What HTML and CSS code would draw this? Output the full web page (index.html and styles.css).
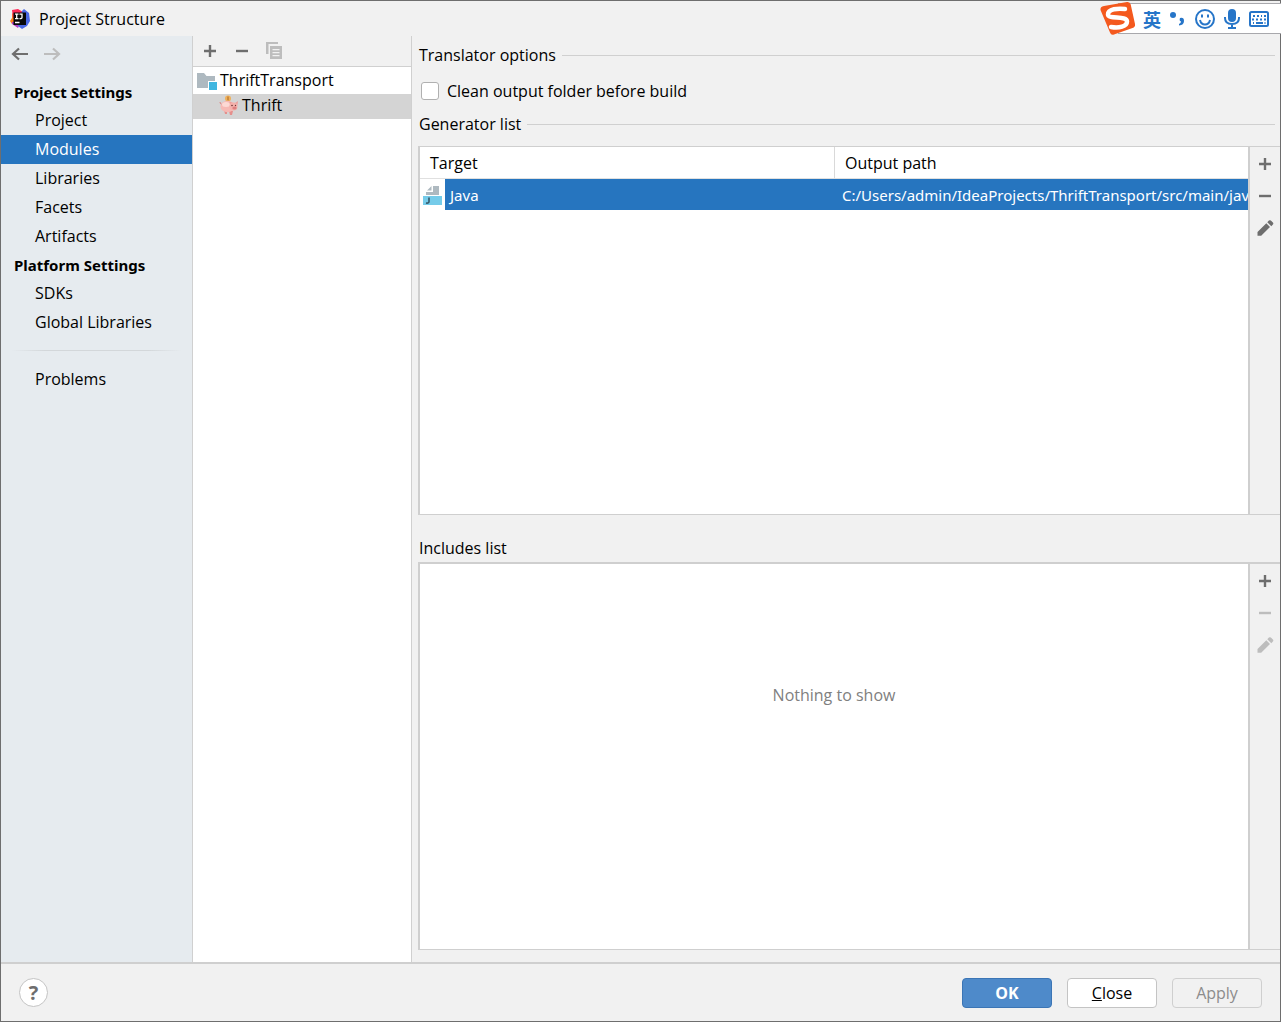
FILE: index.html
```html
<!DOCTYPE html>
<html lang="en">
<head>
    <meta charset="UTF-8">
    <meta name="viewport" content="width=device-width, initial-scale=1.0">
    <title>Project Structure</title>
    <link rel="stylesheet" href="styles.css">
</head>
<body>

<!-- shared icons -->
<svg class="sprite" aria-hidden="true">
    <symbol id="plus" viewBox="0 0 20 20"><path d="M10 4v12M4 10h12" stroke="currentColor" stroke-width="2.4"/></symbol>
    <symbol id="minus" viewBox="0 0 20 20"><path d="M4 10h12" stroke="currentColor" stroke-width="2.4"/></symbol>
    <symbol id="pencil" viewBox="0 0 20 20"><path fill="currentColor" d="M2.500 14 11.300 5.200l3.700 3.700L6.200 17.700H2.500zM12.300 4.200l1.600-1.600q1-.9 2 0l2 2q.9 1 0 2l-1.600 1.600z"/></symbol>
</svg>

<div class="window">
    <header class="titlebar">
        <svg class="app-icon" viewBox="0 0 20 20">
            <path fill="#fc801d" d="M2 5 5 1l8 4-5 11-6-1-2-3 2-3z"/>
            <path fill="#fe2857" d="M2 1 8 0l5 3v5L3 9z"/>
            <path fill="#b13fc4" d="M2 13h9l-3 6-6-4z"/>
            <path fill="#4a68e4" d="m12 2 2-2 5 4 1 8-3 5-5 3-4-3z"/>
            <path fill="#080808" d="M3.500 3.500H16V16H3.500z"/>
            <path fill="none" stroke="#fff" stroke-width="1.300" d="M5 5.200h3.500M6.700 5.200v4.400M5 9.600h3.500M9.500 5.200H12V8.600q0 1.200-2.500 1M5 13.500h4.500"/>
        </svg>
        <h1 class="title">Project Structure</h1>
    </header>

    <div class="content">
        <nav class="sidebar">
            <div class="history">
                <button class="icon-btn" aria-label="Back"><svg viewBox="0 0 20 20"><path d="M18 10H3M9 4.500 3 10l6 5.500" fill="none" stroke="currentColor" stroke-width="2.200"/></svg></button>
                <button class="icon-btn" aria-label="Forward" disabled><svg viewBox="0 0 20 20"><path d="M2 10h15M11 4.500l6 5.500-6 5.500" fill="none" stroke="currentColor" stroke-width="2.200"/></svg></button>
            </div>
            <h2 class="group">Project Settings</h2>
            <a class="item" href="#">Project</a>
            <a class="item selected" href="#">Modules</a>
            <a class="item" href="#">Libraries</a>
            <a class="item" href="#">Facets</a>
            <a class="item" href="#">Artifacts</a>
            <h2 class="group">Platform Settings</h2>
            <a class="item" href="#">SDKs</a>
            <a class="item" href="#">Global Libraries</a>
            <hr class="divider">
            <a class="item" href="#">Problems</a>
        </nav>

        <section class="modules">
            <div class="toolbar">
                <button class="icon-btn" aria-label="Add"><svg><use href="#plus"/></svg></button>
                <button class="icon-btn" aria-label="Remove"><svg><use href="#minus"/></svg></button>
                <button class="icon-btn" aria-label="Copy" disabled><svg viewBox="0 0 20 20"><path fill="currentColor" d="M2 1h12v2H4.500v10H2z"/><path fill="currentColor" fill-rule="evenodd" d="M6 5h12v13H6zm2.500 3v1.200h7V8zm0 3v1.200h7V11zm0 3v1.200h7V14z"/></svg></button>
            </div>
            <ul class="tree">
                <li class="node">
                    <svg class="node-icon" viewBox="0 0 20 20"><path fill="#aeb9c0" d="M0 3h7l2.500 3H18v5h-7v7H0z"/><path fill="#40b6e0" d="M12 12h8v8h-8z"/></svg>
                    ThriftTransport
                </li>
                <li class="node child">
                    <svg class="node-icon" viewBox="0 0 20 20">
                        <circle cx="9" cy="3.500" r="3" fill="#efb15b"/><path stroke="#a86524" d="M9 1.500v4"/>
                        <path fill="#e58f8c" d="M5 15h3v4H6zM10 16h4l-1 4h-2z"/>
                        <ellipse cx="8.500" cy="11.500" rx="7" ry="5.800" fill="#f6b9b4"/>
                        <ellipse cx="7" cy="9.500" rx="4" ry="2.500" fill="#fcd9d4"/>
                        <path fill="#ee9d9b" d="M10.500 6.500 14 8l-3 2zM16 8l3-2-.5 4z"/>
                        <circle cx="14.500" cy="11.500" r="4" fill="#f4b0ab"/>
                        <ellipse cx="15.500" cy="13" rx="2.200" ry="1.600" fill="#df8080"/>
                        <circle cx="13" cy="10.500" r=".8" fill="#6d3535"/><circle cx="16.500" cy="10.500" r=".7" fill="#6d3535"/>
                        <path stroke="#e07f7d" fill="none" d="M1 7q0 2 1.500 2"/>
                    </svg>
                    Thrift
                </li>
            </ul>
        </section>

        <main class="settings">
            <h2 class="caption ruled">Translator options</h2>
            <label class="check"><input type="checkbox"> Clean output folder before build</label>
            <h2 class="caption ruled">Generator list</h2>
            <div class="panel generators">
                <div class="list">
                    <table class="table">
                        <colgroup><col class="col-icon"><col class="col-target"><col></colgroup>
                        <thead>
                            <tr><th colspan="2">Target</th><th>Output path</th></tr>
                        </thead>
                        <tbody>
                            <tr>
                                <td class="icon-cell"><svg viewBox="0 0 20 20"><path fill="#aeb9c0" d="M10 1h6v9H3V7h7zM8.500 1v4.500H4z"/><path fill="#75cbe9" d="M0 11h19v9H0z"/><path fill="none" stroke="#35596a" stroke-width="1.600" d="M6 12.500v4q0 2-3 1.500"/></svg></td>
                                <td>Java</td>
                                <td>C:/Users/admin/IdeaProjects/ThriftTransport/src/main/java</td>
                            </tr>
                        </tbody>
                    </table>
                </div>
                <div class="actions">
                    <button class="icon-btn" aria-label="Add generator"><svg><use href="#plus"/></svg></button>
                    <button class="icon-btn" aria-label="Remove generator"><svg><use href="#minus"/></svg></button>
                    <button class="icon-btn" aria-label="Edit generator"><svg><use href="#pencil"/></svg></button>
                </div>
            </div>
            <h2 class="caption includes-caption">Includes list</h2>
            <div class="panel includes">
                <div class="list"><p class="empty">Nothing to show</p></div>
                <div class="actions">
                    <button class="icon-btn" aria-label="Add include"><svg><use href="#plus"/></svg></button>
                    <button class="icon-btn" aria-label="Remove include" disabled><svg><use href="#minus"/></svg></button>
                    <button class="icon-btn" aria-label="Edit include" disabled><svg><use href="#pencil"/></svg></button>
                </div>
            </div>
        </main>
    </div>

    <footer class="footer">
        <button class="help" aria-label="Help">?</button>
        <button class="btn primary">OK</button>
        <button class="btn"><u>C</u>lose</button>
        <button class="btn" disabled>Apply</button>
    </footer>
</div>

<!-- input method bar floating over the window -->
<div class="ime">
    <svg class="ime-logo" viewBox="0 0 36 36">
        <path fill="#f4591e" d="M4 5 27 1q3-.4 3.700 2.500L35 23q.5 3-2.500 4L14 33.500q-3 1-4-2L.5 9Q0 5.500 4 5z"/>
        <path fill="none" stroke="#fff" stroke-width="4.500" stroke-linecap="round" d="M25 8C18 7 8 8 8 13.500c0 5 19 1 19 7 0 5-8 7-16 5.500"/>
    </svg>
    <span class="ime-lang">英</span>
    <svg class="ime-icon" viewBox="0 0 20 20"><circle cx="5" cy="6" r="3" fill="currentColor"/><path fill="currentColor" d="M12 9q4-1 4 3 0 4-5 4.500V15q2-1 2-2.500-2-.5-1-3.500z"/></svg>
    <svg class="ime-icon" viewBox="0 0 20 20"><g fill="none" stroke="currentColor" stroke-width="2"><circle cx="10" cy="10" r="9"/><path d="M5 11q1 4.500 5 4.500t5-4.500"/></g><path fill="currentColor" d="M6 5.500h2v3H6zM12 5.500h2v3h-2z"/></svg>
    <svg class="ime-icon" viewBox="0 0 20 20"><rect x="6" width="8" height="13" rx="4" fill="currentColor"/><path fill="none" stroke="currentColor" stroke-width="2" d="M3 8v1q0 6 7 6t7-6V8M10 15v4M6 19h8"/></svg>
    <svg class="ime-icon" viewBox="0 0 20 20"><rect x="1" y="3" width="18" height="14" rx="1.500" fill="none" stroke="currentColor" stroke-width="2"/><path stroke="currentColor" stroke-width="2" d="M4 7h2M8 7h2M12 7h1M15 7h2M3 10.500h2M7 10.500h2M11 10.500h2M15 10.500h2M4 14h1M7 14h7M15.500 14h1"/></svg>
</div>

</body>
</html>
```

FILE: styles.css
```css
* {
    box-sizing: border-box;
}
body {
    margin: 0;
    font-family: "Open Sans", "Noto Sans CJK SC", sans-serif;
    font-size: 16px;
    line-height: 20px;
    color: #000;
}
h1, h2, p, ul {
    margin: 0;
    padding: 0;
    font-size: 16px;
    font-weight: normal;
}
button {
    font: inherit;
    padding: 0;
}
.sprite {
    display: none;
}
.window {
    display: flex;
    flex-direction: column;
    height: 100vh;
    min-height: 600px;
    border: 1px solid #6e6e6e;
    background: #f1f1f1;
}
.titlebar {
    display: flex;
    align-items: center;
    gap: 9px;
    height: 35px;
    padding-left: 9px;
}
.app-icon {
    width: 20px;
    height: 20px;
}
.content {
    flex: 1;
    display: flex;
    min-height: 0;
    border-bottom: 2px solid #cfcfcf;
}

/* Buttons made of a single icon */
.icon-btn {
    width: 20px;
    height: 20px;
    border: none;
    background: none;
    color: #6e6e6e;
}
.icon-btn:disabled {
    color: #bdbdbd;
}
.icon-btn svg {
    display: block;
    width: 20px;
    height: 20px;
}

/* Left navigation */
.sidebar {
    width: 192px;
    flex-shrink: 0;
    background: #e6ebef;
    border-right: 1px solid #d0d0d0;
}
.history {
    display: flex;
    gap: 12px;
    padding: 8px 9px 14px;
}
.group {
    padding: 4px 13px;
    font-family: "Noto Sans", sans-serif;
    font-size: 15px;
    font-weight: bold;
}
.item {
    display: block;
    padding: 4px 34px 5px;
    color: #000;
    text-decoration: none;
}
.selected {
    background: #2675bf;
    color: #fff;
}
.divider {
    height: 1px;
    margin: 13px 10px 14px;
    border: none;
    background: linear-gradient(to right, transparent, #d3d7da 20%, #d3d7da 80%, transparent);
}

/* Module tree */
.modules {
    width: 219px;
    flex-shrink: 0;
    background: #fff;
    border-right: 1px solid #d0d0d0;
}
.toolbar {
    display: flex;
    gap: 12px;
    height: 31px;
    padding: 5px 7px;
    background: #f1f1f1;
    border-bottom: 1px solid #d0d0d0;
}
.tree {
    list-style: none;
    padding-top: 2px;
}
.node {
    display: flex;
    align-items: center;
    gap: 3px;
    height: 25px;
    padding: 0 0 3px 4px;
}
.child {
    padding-left: 26px;
    background: #d4d4d4;
}
.node-icon {
    width: 20px;
    height: 20px;
}

/* Facet settings */
.settings {
    flex: 1;
    display: flex;
    flex-direction: column;
    min-width: 0;
    padding: 9px 0 12px 6px;
}
.caption {
    padding-left: 1px;
}
.ruled {
    display: flex;
    align-items: center;
    gap: 6px;
    margin-right: 5px;
}
.ruled::after {
    content: "";
    flex: 1;
    height: 1px;
    background: #d0d0d0;
}
.check {
    display: flex;
    align-items: center;
    gap: 8px;
    padding: 16px 3px 13px;
}
.check input {
    appearance: none;
    width: 18px;
    height: 18px;
    margin: 0;
    border: 1px solid #b0b0b0;
    border-radius: 3px;
    background: #fff;
}
.panel {
    display: flex;
    min-height: 0;
    border: solid #cfcfcf;
    border-width: 1px 0 1px 2px;
}
.generators {
    flex: 20 1 0;
    margin-top: 12px;
}
.includes {
    flex: 21 1 0;
    border-top-width: 2px;
}
.includes-caption {
    padding: 23px 0 4px 1px;
}
.list {
    flex: 1;
    min-width: 0;
    overflow: hidden;
    background: #fff;
    border-right: 2px solid #cfcfcf;
}
.table {
    width: 100%;
    table-layout: fixed;
    border-collapse: separate;
    border-spacing: 0;
}
.col-icon {
    width: 25px;
}
.col-target {
    width: 389px;
}
.table th {
    height: 32px;
    padding: 0 10px;
    border-bottom: 1px solid #e0e0e0;
    font-weight: normal;
    text-align: left;
}
.table th + th {
    border-left: 1px solid #d9d9d9;
}
.table td {
    height: 31px;
    padding: 0 5px;
    overflow: hidden;
    white-space: nowrap;
    background: #2675bf;
    color: #fff;
    font-family: "Noto Sans", sans-serif;
    font-size: 15px;
}
.table td + td + td {
    padding: 0 0 0 8px;
}
.table .icon-cell {
    padding: 0 3px;
    background: #fff;
}
.icon-cell svg {
    display: block;
    width: 20px;
    height: 20px;
}
.actions {
    display: flex;
    flex-direction: column;
    gap: 12px;
    padding: 7px 5px;
}
.empty {
    padding-top: 121px;
    text-align: center;
    color: #808080;
}

/* Bottom buttons */
.footer {
    display: flex;
    align-items: center;
    gap: 15px;
    height: 57px;
    padding: 0 18px;
}
.help {
    width: 29px;
    height: 29px;
    margin-right: auto;
    border: 1px solid #c4c4c4;
    border-radius: 50%;
    background: #fff;
    color: #6e6e6e;
    font-size: 20px;
    font-weight: bold;
}
.btn {
    width: 90px;
    height: 30px;
    border: 1px solid #c4c4c4;
    border-radius: 4px;
    background: #fff;
    color: #000;
}
.btn:disabled {
    border-color: #cfcfcf;
    background: #f1f1f1;
    color: #8c8c8c;
}
.primary {
    border-color: #3b75b5;
    background: #4e8aca;
    color: #fff;
    font-weight: bold;
}

/* Input method bar */
.ime {
    position: absolute;
    top: 3px;
    right: 0;
    display: flex;
    align-items: center;
    gap: 7px;
    height: 31px;
    padding-right: 12px;
    border: solid #a8a8ac;
    border-width: 1px 0;
    background: #fff;
    color: #2675c8;
}
.ime-logo {
    width: 36px;
    height: 36px;
    margin-left: -18px;
}
.ime-lang {
    font-family: "Noto Sans CJK SC", sans-serif;
    font-size: 18px;
    font-weight: bold;
}
.ime-icon {
    width: 20px;
    height: 20px;
}
```
